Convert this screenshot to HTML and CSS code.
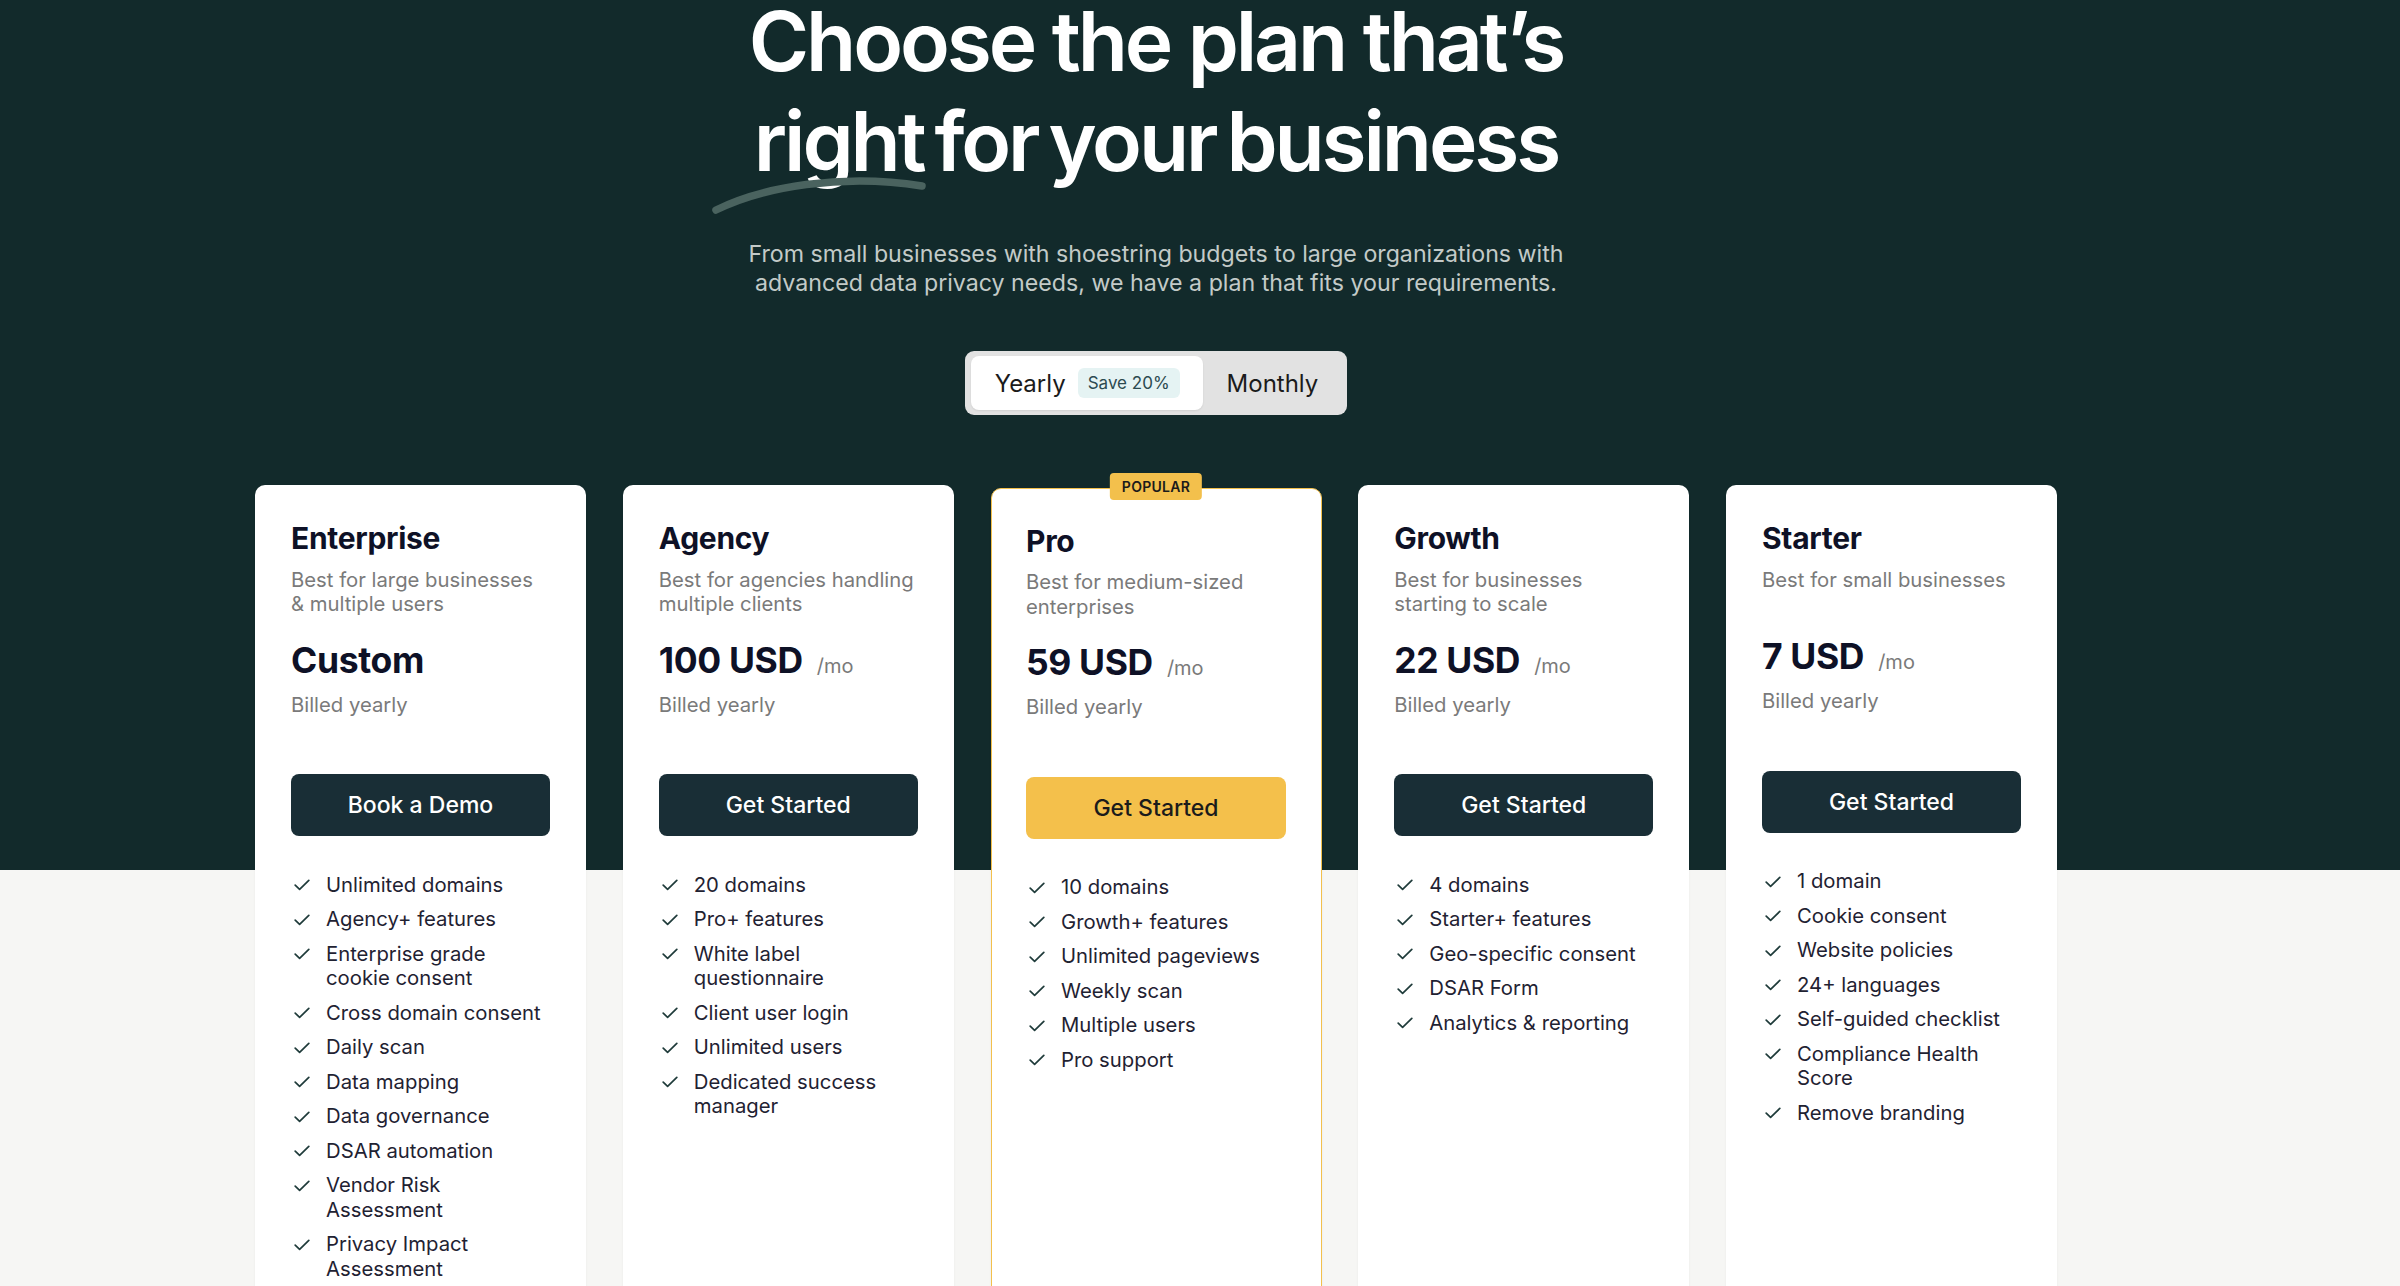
FILE: index.html
```html
<!DOCTYPE html>
<html lang="en">
<head>
<meta charset="utf-8">
<title>Pricing</title>
<link rel="stylesheet" href="styles.css">
</head>
<body>
<div class="page">
  <div class="inner">
    <header class="hero">
      <h1 class="title">Choose the plan that’s<br><span class="line2"><span class="mark">right<svg class="swoosh" viewBox="0 0 216 46" aria-hidden="true"><path d="M4 39 C 50 16, 130 2, 210 15"/></svg></span> for your business</span></h1>
      <p class="lead">From small businesses with shoestring budgets to large organizations with<br>advanced data privacy needs, we have a plan that fits your requirements.</p>
      <div class="toggle">
        <div class="seg active"><span>Yearly</span><span class="save">Save 20%</span></div>
        <div class="seg"><span>Monthly</span></div>
      </div>
    </header>

    <section class="plans">
      <article class="card">
        <h2 class="name">Enterprise</h2>
        <p class="desc">Best for large businesses<br>&amp; multiple users</p>
        <div class="price"><span class="amount">Custom</span></div>
        <p class="billed">Billed yearly</p>
        <a class="btn">Book a Demo</a>
        <ul class="features">
          <li><svg class="check" viewBox="0 0 16 12"><path d="M1.2 6.2 L5.6 10.3 L14.8 1.4"/></svg><span>Unlimited domains</span></li>
          <li><svg class="check" viewBox="0 0 16 12"><path d="M1.2 6.2 L5.6 10.3 L14.8 1.4"/></svg><span>Agency+ features</span></li>
          <li><svg class="check" viewBox="0 0 16 12"><path d="M1.2 6.2 L5.6 10.3 L14.8 1.4"/></svg><span>Enterprise grade<br>cookie consent</span></li>
          <li><svg class="check" viewBox="0 0 16 12"><path d="M1.2 6.2 L5.6 10.3 L14.8 1.4"/></svg><span>Cross domain consent</span></li>
          <li><svg class="check" viewBox="0 0 16 12"><path d="M1.2 6.2 L5.6 10.3 L14.8 1.4"/></svg><span>Daily scan</span></li>
          <li><svg class="check" viewBox="0 0 16 12"><path d="M1.2 6.2 L5.6 10.3 L14.8 1.4"/></svg><span>Data mapping</span></li>
          <li><svg class="check" viewBox="0 0 16 12"><path d="M1.2 6.2 L5.6 10.3 L14.8 1.4"/></svg><span>Data governance</span></li>
          <li><svg class="check" viewBox="0 0 16 12"><path d="M1.2 6.2 L5.6 10.3 L14.8 1.4"/></svg><span>DSAR automation</span></li>
          <li><svg class="check" viewBox="0 0 16 12"><path d="M1.2 6.2 L5.6 10.3 L14.8 1.4"/></svg><span>Vendor Risk<br>Assessment</span></li>
          <li><svg class="check" viewBox="0 0 16 12"><path d="M1.2 6.2 L5.6 10.3 L14.8 1.4"/></svg><span>Privacy Impact<br>Assessment</span></li>
        </ul>
      </article>

      <article class="card">
        <h2 class="name">Agency</h2>
        <p class="desc">Best for agencies handling<br>multiple clients</p>
        <div class="price"><span class="amount">100 USD</span><span class="per">/mo</span></div>
        <p class="billed">Billed yearly</p>
        <a class="btn">Get Started</a>
        <ul class="features">
          <li><svg class="check" viewBox="0 0 16 12"><path d="M1.2 6.2 L5.6 10.3 L14.8 1.4"/></svg><span>20 domains</span></li>
          <li><svg class="check" viewBox="0 0 16 12"><path d="M1.2 6.2 L5.6 10.3 L14.8 1.4"/></svg><span>Pro+ features</span></li>
          <li><svg class="check" viewBox="0 0 16 12"><path d="M1.2 6.2 L5.6 10.3 L14.8 1.4"/></svg><span>White label<br>questionnaire</span></li>
          <li><svg class="check" viewBox="0 0 16 12"><path d="M1.2 6.2 L5.6 10.3 L14.8 1.4"/></svg><span>Client user login</span></li>
          <li><svg class="check" viewBox="0 0 16 12"><path d="M1.2 6.2 L5.6 10.3 L14.8 1.4"/></svg><span>Unlimited users</span></li>
          <li><svg class="check" viewBox="0 0 16 12"><path d="M1.2 6.2 L5.6 10.3 L14.8 1.4"/></svg><span>Dedicated success<br>manager</span></li>
        </ul>
      </article>

      <article class="card popular">
        <span class="badge">POPULAR</span>
        <h2 class="name">Pro</h2>
        <p class="desc">Best for medium-sized<br>enterprises</p>
        <div class="price"><span class="amount">59 USD</span><span class="per">/mo</span></div>
        <p class="billed">Billed yearly</p>
        <a class="btn btn-yellow">Get Started</a>
        <ul class="features">
          <li><svg class="check" viewBox="0 0 16 12"><path d="M1.2 6.2 L5.6 10.3 L14.8 1.4"/></svg><span>10 domains</span></li>
          <li><svg class="check" viewBox="0 0 16 12"><path d="M1.2 6.2 L5.6 10.3 L14.8 1.4"/></svg><span>Growth+ features</span></li>
          <li><svg class="check" viewBox="0 0 16 12"><path d="M1.2 6.2 L5.6 10.3 L14.8 1.4"/></svg><span>Unlimited pageviews</span></li>
          <li><svg class="check" viewBox="0 0 16 12"><path d="M1.2 6.2 L5.6 10.3 L14.8 1.4"/></svg><span>Weekly scan</span></li>
          <li><svg class="check" viewBox="0 0 16 12"><path d="M1.2 6.2 L5.6 10.3 L14.8 1.4"/></svg><span>Multiple users</span></li>
          <li><svg class="check" viewBox="0 0 16 12"><path d="M1.2 6.2 L5.6 10.3 L14.8 1.4"/></svg><span>Pro support</span></li>
        </ul>
      </article>

      <article class="card">
        <h2 class="name">Growth</h2>
        <p class="desc">Best for businesses<br>starting to scale</p>
        <div class="price"><span class="amount">22 USD</span><span class="per">/mo</span></div>
        <p class="billed">Billed yearly</p>
        <a class="btn">Get Started</a>
        <ul class="features">
          <li><svg class="check" viewBox="0 0 16 12"><path d="M1.2 6.2 L5.6 10.3 L14.8 1.4"/></svg><span>4 domains</span></li>
          <li><svg class="check" viewBox="0 0 16 12"><path d="M1.2 6.2 L5.6 10.3 L14.8 1.4"/></svg><span>Starter+ features</span></li>
          <li><svg class="check" viewBox="0 0 16 12"><path d="M1.2 6.2 L5.6 10.3 L14.8 1.4"/></svg><span>Geo-specific consent</span></li>
          <li><svg class="check" viewBox="0 0 16 12"><path d="M1.2 6.2 L5.6 10.3 L14.8 1.4"/></svg><span>DSAR Form</span></li>
          <li><svg class="check" viewBox="0 0 16 12"><path d="M1.2 6.2 L5.6 10.3 L14.8 1.4"/></svg><span>Analytics &amp; reporting</span></li>
        </ul>
      </article>

      <article class="card">
        <h2 class="name">Starter</h2>
        <p class="desc">Best for small businesses</p>
        <div class="price"><span class="amount">7 USD</span><span class="per">/mo</span></div>
        <p class="billed">Billed yearly</p>
        <a class="btn">Get Started</a>
        <ul class="features">
          <li><svg class="check" viewBox="0 0 16 12"><path d="M1.2 6.2 L5.6 10.3 L14.8 1.4"/></svg><span>1 domain</span></li>
          <li><svg class="check" viewBox="0 0 16 12"><path d="M1.2 6.2 L5.6 10.3 L14.8 1.4"/></svg><span>Cookie consent</span></li>
          <li><svg class="check" viewBox="0 0 16 12"><path d="M1.2 6.2 L5.6 10.3 L14.8 1.4"/></svg><span>Website policies</span></li>
          <li><svg class="check" viewBox="0 0 16 12"><path d="M1.2 6.2 L5.6 10.3 L14.8 1.4"/></svg><span>24+ languages</span></li>
          <li><svg class="check" viewBox="0 0 16 12"><path d="M1.2 6.2 L5.6 10.3 L14.8 1.4"/></svg><span>Self-guided checklist</span></li>
          <li><svg class="check" viewBox="0 0 16 12"><path d="M1.2 6.2 L5.6 10.3 L14.8 1.4"/></svg><span>Compliance Health<br>Score</span></li>
          <li><svg class="check" viewBox="0 0 16 12"><path d="M1.2 6.2 L5.6 10.3 L14.8 1.4"/></svg><span>Remove branding</span></li>
        </ul>
      </article>
    </section>
  </div>
</div>
</body>
</html>
```

FILE: styles.css
```css
* { box-sizing: border-box; }

html, body {
  margin: 0;
  padding: 0;
}

body {
  font-family: "Inter", "Liberation Sans", sans-serif;
  background: #f6f6f4;
  overflow: hidden;
}

.page {
  background: linear-gradient(to bottom, #122a2b 0, #122a2b 870px, #f6f6f4 870px, #f6f6f4 100%);
  padding-right: 88px;
  min-height: 1400px;
}

.inner {
  width: 1802px;
  margin: 0 auto;
}

.hero {
  display: flex;
  flex-direction: column;
  align-items: center;
  text-align: center;
}

.title {
  margin: -8px 0 0;
  font-weight: 600;
  font-size: 82px;
  line-height: 100px;
  letter-spacing: -0.038em;
  color: #ffffff;
}

.line2 {
  word-spacing: -0.08em;
}

.mark {
  position: relative;
  display: inline-block;
  word-spacing: normal;
}

.swoosh {
  position: absolute;
  left: -42px;
  top: 79px;
  width: 216px;
  height: 46px;
  fill: none;
  stroke: #4a635f;
  stroke-width: 7.5;
  stroke-linecap: round;
}

.lead {
  margin: 48px 0 0;
  font-size: 23.2px;
  line-height: 29px;
  color: #c3cac8;
}

.toggle {
  margin-top: 53px;
  display: flex;
  align-items: center;
  padding: 5px 6px;
  background: #e2e2e2;
  border-radius: 9px;
}

.seg {
  height: 54px;
  display: flex;
  align-items: center;
  gap: 12px;
  padding: 0 23px 0 24px;
  border-radius: 8px;
  font-size: 24px;
  color: #1b1b1b;
}

.seg.active {
  background: #ffffff;
  box-shadow: 0 1px 2px rgba(0, 0, 0, 0.08);
}

.save {
  height: 30px;
  line-height: 30px;
  padding: 0 10px;
  border-radius: 6px;
  background: #e5f3f3;
  color: #2c4a50;
  font-size: 17px;
}

.plans {
  margin-top: 70px;
  display: grid;
  grid-template-columns: repeat(5, 1fr);
  gap: 36.75px;
  align-items: start;
}

.card {
  position: relative;
  background: #ffffff;
  border-radius: 10px;
  padding: 35px 36px 48px;
  box-shadow: 0 1px 3px rgba(0, 0, 0, 0.05);
  min-height: 900px;
}

.card.popular {
  margin-top: 3px;
  border: 1.5px solid #f3c04c;
  padding: 33.5px 34.5px 46.5px;
}

.badge {
  position: absolute;
  top: -16.5px;
  left: 50%;
  transform: translateX(-50%);
  height: 27px;
  line-height: 27px;
  padding: 0 12px;
  border-radius: 4px;
  background: #f3c04c;
  color: #1b1b1b;
  font-size: 14px;
  font-weight: 600;
  letter-spacing: 0.02em;
}

.name {
  margin: 0;
  font-size: 30px;
  line-height: 36px;
  font-weight: 700;
  letter-spacing: -0.01em;
  color: #0e1126;
}

.desc {
  margin: 11.5px 0 0;
  min-height: 45.5px;
  font-size: 20.3px;
  line-height: 24.5px;
  color: #7a7a7a;
}

.price {
  margin-top: 24px;
  display: flex;
  align-items: baseline;
  gap: 14px;
}

.amount {
  font-size: 35.5px;
  line-height: 40px;
  font-weight: 700;
  letter-spacing: -0.01em;
  color: #0e1126;
}

.per {
  font-size: 20px;
  color: #7a7a7a;
}

.billed {
  margin: 12px 0 0;
  font-size: 20.3px;
  line-height: 24.5px;
  color: #7a7a7a;
}

.btn {
  margin-top: 57px;
  height: 62px;
  display: flex;
  align-items: center;
  justify-content: center;
  border-radius: 8px;
  background: #192e36;
  color: #ffffff;
  font-size: 23px;
  font-weight: 500;
}

.btn-yellow {
  background: #f4c04b;
  color: #1b1b1b;
}

.features {
  list-style: none;
  margin: 36.5px 0 0;
  padding: 0;
  display: flex;
  flex-direction: column;
  gap: 10px;
}

.features li {
  display: flex;
  align-items: flex-start;
  gap: 16px;
  padding-left: 3px;
  font-size: 20.3px;
  line-height: 24.5px;
  color: #1f2232;
}

.check {
  flex: none;
  width: 16px;
  height: 12px;
  margin-top: 6.5px;
  fill: none;
  stroke: #1f3b3a;
  stroke-width: 1.7;
  stroke-linecap: round;
  stroke-linejoin: round;
}
```
